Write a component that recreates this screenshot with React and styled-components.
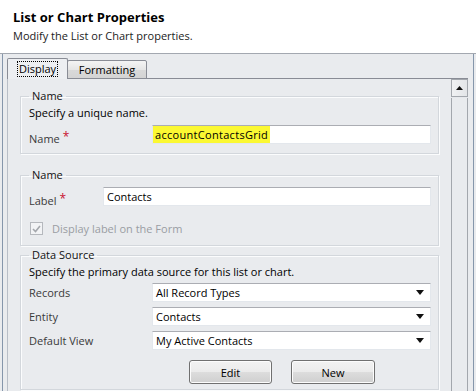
import React from "react";
import styled, { createGlobalStyle } from "styled-components";

const Global = createGlobalStyle`
  html, body { margin: 0; padding: 0; background: #e9ebee; }
  * { box-sizing: border-box; }
`;

const FONT = `"Open Sans", "Noto Sans", "Liberation Sans", sans-serif`;

const Window = styled.div`
  width: 476px;
  height: 391px;
  overflow: hidden;
  display: flex;
  flex-direction: column;
  background: #e9ebee;
  font-family: ${FONT};
  font-size: 11px;
  color: #000;
`;

const Header = styled.header`
  height: 54px;
  background: #fff;
  border-bottom: 1px solid #a3a8b0;
  padding: 9px 0 0 13px;
`;

const Title = styled.h1`
  margin: 0;
  font-size: 13px;
  font-weight: 700;
  line-height: 17px;
  color: #000;
`;

const Subtitle = styled.p`
  margin: 2px 0 0;
  font-size: 11px;
  line-height: 16px;
  color: #222;
`;

const Frame = styled.div`
  flex: 1;
  min-height: 0;
  margin: 0 2px;
  border-left: 1px solid #8596ab;
  border-right: 1px solid #8596ab;
  padding: 4px 5px 0 4px;
  display: flex;
  flex-direction: column;
`;

const TabRow = styled.div`
  display: flex;
  align-items: flex-end;
  height: 21px;
  margin-bottom: -1px;
  position: relative;
  z-index: 1;
`;

const Tab = styled.div`
  display: flex;
  align-items: center;
  justify-content: center;
  width: ${(p) => p.$w}px;
  height: ${(p) => (p.$active ? 21 : 19)}px;
  margin-left: ${(p) => (p.$active ? 0 : -1)}px;
  border: 1px solid #898c95;
  border-bottom: ${(p) => (p.$active ? "none" : "1px solid #898c95")};
  border-radius: 2px 2px 0 0;
  background: ${(p) =>
    p.$active ? "#edeff2" : "linear-gradient(#f4f4f4, #e6e6e6 50%, #d9d9d9 51%, #d4d4d4)"};
  font-size: 11px;
  color: #000;
  padding-bottom: ${(p) => (p.$active ? 1 : 0)}px;
`;

const Focus = styled.span`
  outline: 1px dotted #000;
  outline-offset: 0;
  padding: 0 1px;
  line-height: 14px;
`;

const Panel = styled.div`
  flex: 1;
  min-height: 0;
  display: flex;
  border-top: 1px solid #898c95;
  border-left: 1px solid #b8bec7;
`;

const Content = styled.div`
  flex: 1;
  padding: 9px 12px 0 12px;
  display: flex;
  flex-direction: column;
`;

const Group = styled.fieldset`
  margin: ${(p) => p.$mt || 0}px 0 0;
  padding: 0 7px ${(p) => p.$pb || 0}px 8px;
  border: 1px solid #d3d7dc;
  box-shadow: inset 1px 1px 0 #fbfcfd, 1px 1px 0 #fbfcfd;
  min-width: 0;
`;

const Legend = styled.legend`
  padding: 0 3px;
  font-size: 11px;
  line-height: 16px;
  color: #111;
`;

const Note = styled.div`
  margin-top: 1px;
  line-height: 16px;
  color: #000;
`;

const Row = styled.div`
  display: flex;
  align-items: center;
  height: 19px;
  margin-top: ${(p) => p.$mt || 0}px;
`;

const Label = styled.div`
  width: ${(p) => p.$w}px;
  flex: none;
  color: #3a3a3a;
  align-self: ${(p) => (p.$low ? "flex-end" : "center")};
  line-height: 16px;
  margin-bottom: ${(p) => (p.$low ? -3 : 0)}px;
`;

const Req = styled.span`
  color: #c8102e;
  margin-left: 3px;
  font-size: 12px;
  position: relative;
  top: -2px;
`;

const Field = styled.div`
  flex: 1;
  height: 19px;
  display: flex;
  align-items: stretch;
  background: #fff;
  border: 1px solid #e3e7ec;
  border-top-color: #abadb3;
  color: #000;
  padding-left: ${(p) => p.$pl ?? 3}px;
  line-height: 17px;
`;

const Mark = styled.span`
  background: #fbf832;
  padding: 0 2px;
  letter-spacing: 0.3px;
  display: flex;
  align-items: center;
`;

const Select = styled(Field)`
  align-items: center;
  justify-content: space-between;
  padding-right: 6px;
`;

const Caret = styled.svg`
  width: 8px;
  height: 5px;
  flex: none;
`;

const Check = styled.span`
  width: 13px;
  height: 13px;
  flex: none;
  border: 1px solid #b5b8bd;
  background: #f2f3f5;
  display: flex;
  align-items: center;
  justify-content: center;
  margin-left: 1px;
  margin-right: 9px;
`;

const Muted = styled.span`
  color: #9a9da3;
`;

const ButtonRow = styled.div`
  display: flex;
  gap: 19px;
  margin-top: 10px;
  padding-left: 160px;
`;

const Button = styled.button`
  width: ${(p) => p.$w}px;
  height: 24px;
  font-family: ${FONT};
  font-size: 11px;
  color: #000;
  border: 1px solid #707070;
  border-radius: 3px;
  background: linear-gradient(#f2f2f2, #ebebeb 49%, #dddddd 50%, #cfcfcf);
  box-shadow: inset 0 0 0 1px #fcfcfc;
  padding: 0;
`;

const Scroll = styled.div`
  width: 17px;
  flex: none;
  display: flex;
  flex-direction: column;
  background: #e6e8ec;
`;

const Arrow = styled.div`
  height: 18px;
  border: 1px solid #a3a7ad;
  background: linear-gradient(90deg, #f0f1f3, #e3e5e8);
  display: flex;
  align-items: center;
  justify-content: center;
`;

const Thumb = styled.div`
  flex: 1;
  margin-top: 1px;
  border-left: 1px solid #a3a7ad;
  border-right: 1px solid #a3a7ad;
  background: #e9ebee;
`;

const Down = () => (
  <Caret viewBox="0 0 8 5">
    <path d="M0 0h8L4 5z" fill="#111" />
  </Caret>
);

export default function App() {
  return (
    <>
      <Global />
      <Window>
        <Header>
          <Title>List or Chart Properties</Title>
          <Subtitle>Modify the List or Chart properties.</Subtitle>
        </Header>
        <Frame>
          <TabRow>
            <Tab $active $w={61}>
              <Focus>Display</Focus>
            </Tab>
            <Tab $w={80}>Formatting</Tab>
          </TabRow>
          <Panel>
            <Content>
              <Group $pb={9}>
                <Legend>Name</Legend>
                <Note>Specify a unique name.</Note>
                <Row $mt={4}>
                  <Label $w={123} $low>
                    Name<Req>*</Req>
                  </Label>
                  <Field $pl={0}>
                    <Mark>accountContactsGrid</Mark>
                  </Field>
                </Row>
              </Group>
              <Group $mt={13} $pb={7}>
                <Legend>Name</Legend>
                <Row $mt={4}>
                  <Label $w={74} $low>
                    Label<Req>*</Req>
                  </Label>
                  <Field>Contacts</Field>
                </Row>
                <Row $mt={13}>
                  <Check>
                    <svg width="9" height="8" viewBox="0 0 9 8">
                      <path d="M1 4l2.5 2.5L8 1" stroke="#a4a7ac" strokeWidth="1.6" fill="none" />
                    </svg>
                  </Check>
                  <Muted>Display label on the Form</Muted>
                </Row>
              </Group>
              <Group $mt={1} $pb={5}>
                <Legend>Data Source</Legend>
                <Note>Specify the primary data source for this list or chart.</Note>
                <Row $mt={3}>
                  <Label $w={123}>Records</Label>
                  <Select>
                    All Record Types
                    <Down />
                  </Select>
                </Row>
                <Row $mt={5}>
                  <Label $w={123}>Entity</Label>
                  <Select>
                    Contacts
                    <Down />
                  </Select>
                </Row>
                <Row $mt={5}>
                  <Label $w={123}>Default View</Label>
                  <Select>
                    My Active Contacts
                    <Down />
                  </Select>
                </Row>
                <ButtonRow>
                  <Button $w={83}>Edit</Button>
                  <Button $w={84}>New</Button>
                </ButtonRow>
              </Group>
            </Content>
            <Scroll>
              <Arrow>
                <svg width="7" height="4" viewBox="0 0 7 4">
                  <path d="M0 4h7L3.5 0z" fill="#111" />
                </svg>
              </Arrow>
              <Thumb />
            </Scroll>
          </Panel>
        </Frame>
      </Window>
    </>
  );
}
